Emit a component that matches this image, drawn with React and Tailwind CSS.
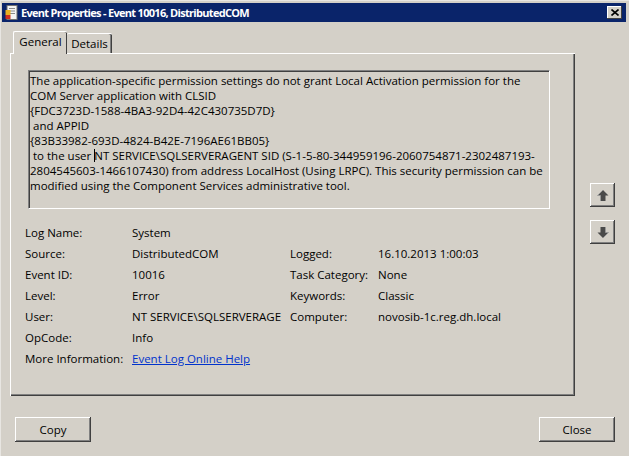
import React from "react";

const raised = "shadow-[inset_-1px_-1px_0_#404040,inset_1px_1px_0_#ffffff,inset_-2px_-2px_0_#808080]";

function ArrowBtn({ down }) {
  return (
    <div className={`w-[25px] h-[24px] bg-[#d4d0c8] flex items-center justify-center ${raised}`}>
      <svg width="12" height="13" viewBox="0 0 12 13" className={down ? "rotate-180" : ""}>
        <polygon points="6,1 11.5,6.5 8.5,6.5 8.5,12 3.5,12 3.5,6.5 0.5,6.5" fill="#4a4a4a" />
        <polyline points="6,1 0.5,6.5 3.5,6.5 3.5,12" fill="none" stroke="#9a9a9a" strokeWidth="0.8" />
      </svg>
    </div>
  );
}

const fields = [
  ["Log Name:", "System", "", ""],
  ["Source:", "DistributedCOM", "Logged:", "16.10.2013 1:00:03"],
  ["Event ID:", "10016", "Task Category:", "None"],
  ["Level:", "Error", "Keywords:", "Classic"],
  ["User:", "NT SERVICE\\SQLSERVERAGE", "Computer:", "novosib-1c.reg.dh.local"],
  ["OpCode:", "Info", "", ""],
];

export default function App() {
  return (
    <div className="w-[629px] h-[456px] bg-[#d4d0c8] overflow-hidden text-[11.5px] text-black font-['Open_Sans',sans-serif] border-t border-l border-t-[#e8e6e2] border-l-[#e8e6e2]">
      <div className="mt-[2px] ml-[1px] mr-[3px] h-[19px] bg-[#0a246a] flex items-center pl-[3px] pr-[4px]">
        <svg width="13" height="15" viewBox="0 0 13 15" className="shrink-0">
          <rect x="2" y="0.5" width="10" height="14" fill="#f4f4f4" stroke="#707070" />
          <line x1="4" y1="3.5" x2="10" y2="3.5" stroke="#8a8a8a" />
          <line x1="4" y1="6" x2="10" y2="6" stroke="#8a8a8a" />
          <line x1="4" y1="8.5" x2="10" y2="8.5" stroke="#8a8a8a" />
          <rect x="0.5" y="5" width="5" height="5" fill="#e8b020" />
          <rect x="0.5" y="10" width="5" height="4" fill="#d03020" />
        </svg>
        <span className="ml-[3px] text-white font-bold text-[11px] leading-none font-['Open_Sans',sans-serif] tracking-[-0.7px]">
          Event Properties - Event 10016, DistributedCOM
        </span>
        <div className="ml-auto w-[15px] h-[13px] bg-[#d4d0c8] flex items-center justify-center shadow-[inset_-1px_-1px_0_#404040,inset_1px_1px_0_#ffffff]">
          <svg width="8" height="7" viewBox="0 0 8 7">
            <path d="M0.5 0.5 L7.5 6.5 M7.5 0.5 L0.5 6.5" stroke="#000" strokeWidth="1.6" />
          </svg>
        </div>
      </div>

      <div className="flex pl-[9px] mt-[9px]">
        <div className="w-[565px] flex flex-col">
          <div className="flex items-end h-[22px] pl-[3px] relative z-10">
            <div className="h-[23px] w-[54px] mb-[-1px] bg-[#d4d0c8] border-t border-l border-white shadow-[inset_-1px_0_0_#404040] rounded-t-[2px] flex justify-center pt-[1px]">
              <span>General</span>
            </div>
            <div className="h-[20px] w-[45px] bg-[#d4d0c8] border-t border-white shadow-[inset_-1px_0_0_#404040,inset_-2px_0_0_#808080] rounded-t-[2px] flex justify-center pt-[1px]">
              <span>Details</span>
            </div>
          </div>
          <div className="h-[343px] border-t border-l border-white shadow-[inset_-1px_-1px_0_#404040,inset_-2px_-2px_0_#808080] pt-[16px]">
            <div className="ml-[17px] w-[522px] h-[139px] border-t border-l border-t-[#808080] border-l-[#808080] border-b border-r border-b-white border-r-white shadow-[inset_1px_1px_0_#404040] pl-[1px] pt-[2px] leading-[15px] whitespace-pre">
              <div>The application-specific permission settings do not grant Local Activation permission for the</div>
              <div>COM Server application with CLSID</div>
              <div>{"{FDC3723D-1588-4BA3-92D4-42C430735D7D}"}</div>
              <div> and APPID</div>
              <div>{"{83B33982-693D-4824-B42E-7196AE61BB05}"}</div>
              <div> to the user <span className="inline-block w-px h-[13px] bg-black align-[-2px] mr-[-1px]"></span>NT SERVICE\SQLSERVERAGENT SID (S-1-5-80-344959196-2060754871-2302487193-</div>
              <div>2804545603-1466107430) from address LocalHost (Using LRPC). This security permission can be</div>
              <div>modified using the Component Services administrative tool.</div>
            </div>
            <div className="ml-[14px] mt-[13px] grid grid-cols-[107px_158px_88px_1fr] auto-rows-[21px] items-center whitespace-nowrap">
              {fields.map((r, i) => (
                <React.Fragment key={i}>
                  <div>{r[0]}</div>
                  <div className="overflow-hidden">{r[1]}</div>
                  <div>{r[2]}</div>
                  <div>{r[3]}</div>
                </React.Fragment>
              ))}
              <div>More Information:</div>
              <div className="col-span-3">
                <span className="text-[#0033cc] underline">Event Log Online Help</span>
              </div>
            </div>
          </div>
        </div>
        <div className="ml-[15px] flex flex-col">
          <div className="mt-[152px]"><ArrowBtn /></div>
          <div className="mt-[13px]"><ArrowBtn down /></div>
        </div>
      </div>

      <div className="flex justify-between pl-[14px] pr-[14px] mt-[21px]">
        <div className={`w-[76px] h-[25px] flex items-center justify-center ${raised}`}>Copy</div>
        <div className={`w-[76px] h-[25px] flex items-center justify-center ${raised}`}>Close</div>
      </div>
    </div>
  );
}
